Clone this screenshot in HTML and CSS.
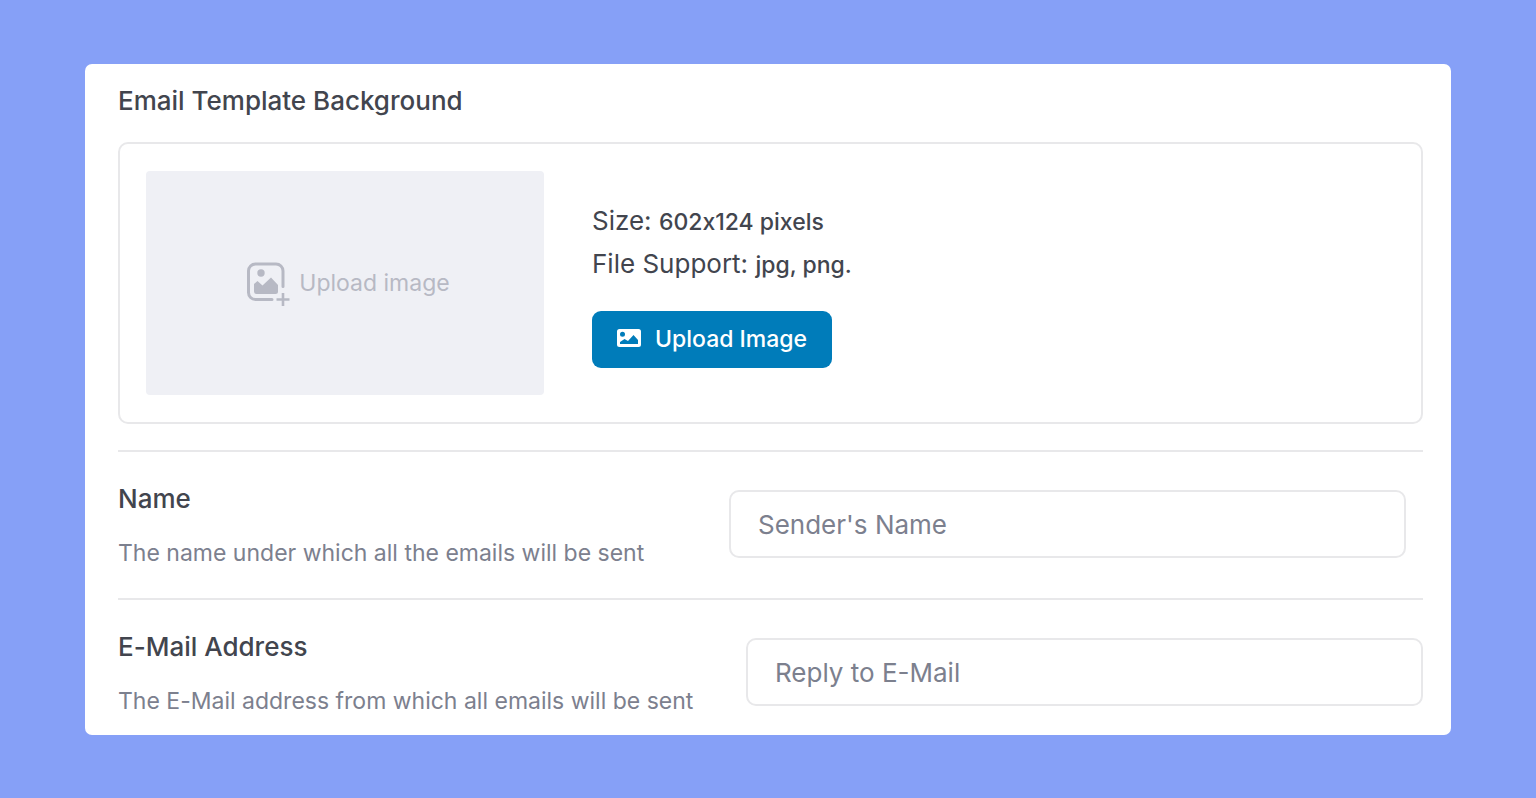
FILE: index.html
```html
<!DOCTYPE html>
<html lang="en">

<head>
  <meta charset="utf-8">
  <title>Email Template Settings</title>
  <link rel="stylesheet" href="styles.css">
</head>

<body>
<form class="panel">

  <h2>Email Template Background</h2>

  <div class="upload-box">
    <div class="preview">
      <svg width="44" height="46" viewBox="0 0 44 46" fill="none">
        <path d="M26 39.500H9.500a7 7 0 0 1-7-7V11a7 7 0 0 1 7-7H30a7 7 0 0 1 7 7V26.500" stroke="#b7b9c4" stroke-width="3" stroke-linecap="round"/>
        <circle cx="15" cy="13" r="3.700" fill="#b7b9c4"/>
        <path d="M8 24l3.500-3 5 4.500 8.500-8 7 7.500v6.500a2.500 2.500 0 0 1-2.500 2.500h-19A2.500 2.500 0 0 1 8 31.500z" fill="#b7b9c4"/>
        <path d="M37 33v13M30.500 39.500h13" stroke="#b7b9c4" stroke-width="2.600"/>
      </svg>
      <span>Upload image</span>
    </div>
    <div class="details">
      <p>Size: <strong>602x124 pixels</strong></p>
      <p>File Support: <strong>jpg, png.</strong></p>
      <button type="button" class="button">
        <svg width="24" height="20" viewBox="0 0 24 20">
          <path fill="#fff" fill-rule="evenodd" d="M2.500 0h19A2.500 2.500 0 0 1 24 2.500v13a2.500 2.500 0 0 1-2.500 2.500h-19A2.500 2.500 0 0 1 0 15.500v-13A2.500 2.500 0 0 1 2.500 0zM5.500 2.800a2.500 2.500 0 1 0 0 5 2.500 2.500 0 0 0 0-5zM3 15h18v-4l-4.500-5-5.500 6-3.500-2L3 13z"/>
        </svg>
        Upload Image
      </button>
    </div>
  </div>

  <div class="field">
    <div class="field-text">
      <label for="senderName">Name</label>
      <p>The name under which all the emails will be sent</p>
    </div>
    <input class="inset" id="senderName" type="text" placeholder="Sender's Name">
  </div>

  <div class="field">
    <div class="field-text">
      <label for="replyEmail">E-Mail Address</label>
      <p>The E-Mail address from which all emails will be sent</p>
    </div>
    <input id="replyEmail" type="email" placeholder="Reply to E-Mail">
  </div>

</form>
</body>

</html>
```
FILE: styles.css
```css
* { box-sizing: border-box }
body { background: #86a0f7; color: #42454e; font-family: Inter, "Liberation Sans", sans-serif; font-size: 26px; font-variant-ligatures: no-contextual; margin: 0; padding: 64px 85px }
h2, p { margin: 0 }
h2 { font-size: 26px; font-weight: 500; line-height: 36px; margin-bottom: 23px }

.panel { background: white; border-radius: 7px; padding: 19px 28px 20px 33px }

/* Image upload */

.upload-box {
  display: flex;
  align-items: center;
  gap: 48px;
  border: 2px solid #e8e8ea;
  border-radius: 10px;
  padding: 27px 26px;
  margin-bottom: 26px;
}

.preview {
  display: flex;
  align-items: center;
  justify-content: center;
  gap: 9px;
  flex: 0 0 398px;
  height: 224px;
  padding-left: 6px;
  background: #eff0f5;
  border-radius: 4px;
  color: #b7b9c4;
  font-size: 23px;
}

.details p { line-height: 43px }
.details strong { font-size: 23px; font-weight: 500; line-height: 1 }

.button {
  display: flex;
  align-items: center;
  gap: 14px;
  height: 57px;
  margin-top: 26px;
  padding: 0 25px;
  background: #007cba;
  border: 0;
  border-radius: 9px;
  color: white;
  cursor: pointer;
  font-family: inherit;
  font-size: 23px;
  font-weight: 500;
}

/* Settings rows */

.field {
  display: flex;
  align-items: flex-start;
  justify-content: space-between;
  border-top: 2px solid #e8e8ea;
  padding: 31px 0;
}

.field:last-child { padding-bottom: 0 }
.field label { display: block; font-weight: 500; line-height: 32px; margin-bottom: 24px }
.field p { color: #7c808e; font-size: 23px; line-height: 28px }

.field input {
  flex: 0 0 677px;
  height: 68px;
  margin-top: 7px;
  background: white;
  border: 2px solid #e8e8ea;
  border-radius: 10px;
  color: #42454e;
  font-family: inherit;
  font-size: 26px;
  padding: 0 27px;
}

.field input.inset { margin-right: 17px }
.field input::placeholder { color: #7c808e; opacity: 1 }
```
